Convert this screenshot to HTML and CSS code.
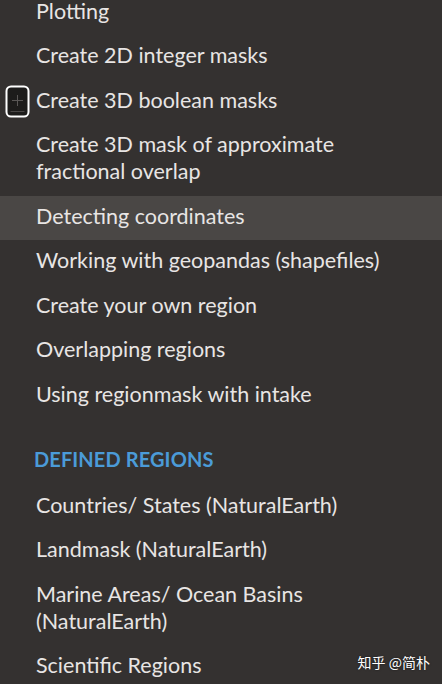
FILE: index.html
```html
<!DOCTYPE html>
<html>
<head>
<meta charset="utf-8">
<link rel="stylesheet" href="styles.css">
</head>
<body>
<nav class="nav">
  <div class="item">Plotting</div>
  <div class="item">Create 2D integer masks</div>
  <div class="item has-icon">
    <span class="copy-icon">
      <svg width="25" height="33" viewBox="0 0 25 33">
        <rect x="1.5" y="1.5" width="22" height="30" rx="4.5" fill="#1d1c1b" stroke="#ffffff" stroke-width="2"/>
        <line x1="12.5" y1="10" x2="12.5" y2="21" stroke="#5a5756" stroke-width="1"/>
        <line x1="7" y1="15.5" x2="18" y2="15.5" stroke="#5a5756" stroke-width="1"/>
        <line x1="5.5" y1="26.5" x2="19.5" y2="26.5" stroke="#4a4746" stroke-width="1"/>
      </svg>
    </span>
    Create 3D boolean masks
  </div>
  <div class="item">Create 3D mask of approximate fractional overlap</div>
  <div class="item active">Detecting coordinates</div>
  <div class="item">Working with geopandas (shapefiles)</div>
  <div class="item">Create your own region</div>
  <div class="item">Overlapping regions</div>
  <div class="item">Using regionmask with intake</div>
  <div class="section">DEFINED REGIONS</div>
  <div class="item">Countries/ States (NaturalEarth)</div>
  <div class="item">Landmask (NaturalEarth)</div>
  <div class="item">Marine Areas/ Ocean Basins (NaturalEarth)</div>
  <div class="item">Scientific Regions</div>
</nav>
<div class="watermark">知乎 @简朴</div>
</body>
</html>
```
FILE: styles.css
```css
html, body {
  margin: 0;
  padding: 0;
  background: #343130;
  height: 100%;
  overflow: hidden;
}
body {
  font-family: Lato, "Noto Sans", sans-serif;
  color: #e8e5e4;
  position: relative;
}
.nav {
  margin-top: -9.25px;
  width: 442px;
}
.item {
  position: relative;
  padding: 6.75px 40px 10.75px 36px;
  font-size: 21.5px;
  line-height: 27px;
}
.item.active {
  background: #4a4745;
}
.copy-icon {
  position: absolute;
  left: 5px;
  top: 5.5px;
  width: 25px;
  height: 33px;
}
.copy-icon svg {
  display: block;
}
.section {
  padding: 27.75px 0 11.75px 34px;
  font-size: 20px;
  line-height: 27px;
  font-weight: 700;
  color: #4b9bd8;
  letter-spacing: 0.1px;
}
.watermark {
  position: absolute;
  right: 12px;
  bottom: 12px;
  font-family: "Noto Sans CJK SC", "Noto Sans", sans-serif;
  font-size: 14px;
  line-height: 20px;
  color: #ffffff;
  text-shadow: 0 0 2px rgba(0,0,0,0.6);
}
```
